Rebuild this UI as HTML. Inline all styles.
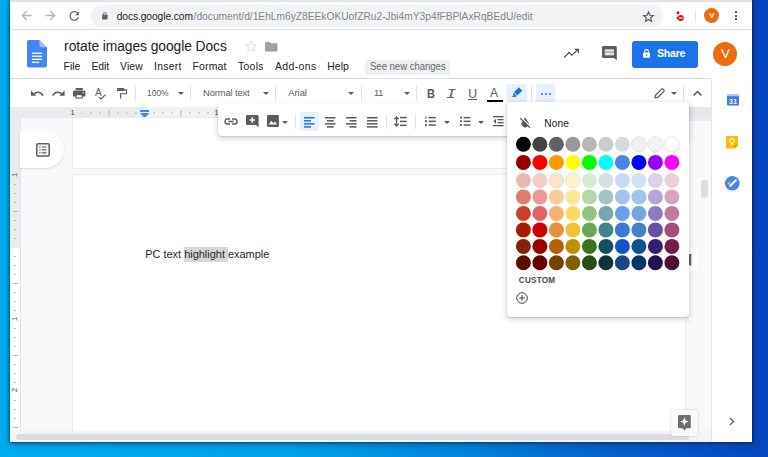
<!DOCTYPE html><html><head><meta charset="utf-8"><title>rotate images google Docs</title><style>
html,body{margin:0;padding:0;}
body{width:768px;height:457px;overflow:hidden;position:relative;font-family:"Liberation Sans", sans-serif;
 background:linear-gradient(90deg,#00adef 0%,#00a2ea 38%,#0385dc 60%,#0560cc 80%,#0645c0 100%);}
#lstrip{position:absolute;left:0;top:0;width:10px;height:442px;background:linear-gradient(90deg,#00adef 0,#00adef 60%,#009fe6 82%,#0083c4 95%,#00699f 100%);}
#rstrip{position:absolute;left:752px;top:0;width:16px;height:443px;background:linear-gradient(90deg,#03338f 0,#0540b4 12%,#0544bd 30%,#0645c0 36%);}
#win{position:absolute;left:10px;top:0;width:742px;height:441.6px;background:#fff;overflow:hidden;box-shadow:0 1px 2px rgba(0,30,80,.5),0 3px 7px rgba(0,40,90,.38);}
svg{overflow:visible;}
.t{position:absolute;white-space:nowrap;line-height:1;font-family:"Liberation Sans", sans-serif;}
.vr{transform:rotate(-90deg);transform-origin:center;line-height:8px;width:6px;height:8px;text-align:center;}
</style></head><body><div id="lstrip"></div><div id="rstrip"></div><div id="win">
<div style="position:absolute;left:0px;top:0px;width:742px;height:2.1px;background:#dfe2e7;"></div>
<div style="position:absolute;left:0px;top:29px;width:742px;height:1px;background:#dcdee1;"></div>
<svg style="position:absolute;left:11px;top:10px;" width="11" height="11" viewBox="0 0 11 11" preserveAspectRatio="none"><path d="M10.5 5.5H1.5M5.8 1L1.3 5.5L5.8 10" fill="none" stroke="#b5b8bc" stroke-width="1.3"/></svg>
<svg style="position:absolute;left:35px;top:10px;" width="11" height="11" viewBox="0 0 11 11" preserveAspectRatio="none"><path d="M0.5 5.5H9.5M5.2 1L9.7 5.5L5.2 10" fill="none" stroke="#b5b8bc" stroke-width="1.3"/></svg>
<svg style="position:absolute;left:58.4px;top:10px;" width="12" height="12" viewBox="0 0 12 12" preserveAspectRatio="none"><path d="M9.6 3.2A4.3 4.3 0 1 0 10.4 7.2" fill="none" stroke="#5f6368" stroke-width="1.2"/><path d="M10.9 1.4V5.2H7.1Z" fill="#5f6368"/></svg>
<div style="position:absolute;left:81px;top:5px;width:572px;height:22px;background:#f1f3f4;border-radius:11px;"></div>
<svg style="position:absolute;left:91.6px;top:12.2px;" width="6" height="8" viewBox="0 0 6 8" preserveAspectRatio="none"><rect x="0.1" y="2.7" width="5.4" height="4.7" rx="0.6" fill="#5f6368"/><path d="M1.4 3V2.1a1.4 1.4 0 0 1 2.8 0V3" fill="none" stroke="#5f6368" stroke-width="0.95"/></svg>
<span class="t url" style="left:106.7px;top:11.97px;font-size:10.2px;color:#202124;letter-spacing:-0.058px;">docs.google.com</span>
<span class="t url2" style="left:183.6px;top:11.97px;font-size:10.2px;color:#80868b;letter-spacing:0.016px;">/document/d/1EhLm6yZ8EEkOKUofZRu2-Jbi4mY3p4fFBPlAxRqBEdU/edit</span>
<svg style="position:absolute;left:633px;top:11px;" width="11" height="11" viewBox="0 0 11 11" preserveAspectRatio="none"><path d="M5.5 0.9L6.9 4.2L10.4 4.5L7.7 6.8L8.5 10.2L5.5 8.4L2.5 10.2L3.3 6.8L0.6 4.5L4.1 4.2Z" fill="none" stroke="#4f5256" stroke-width="1.15"/></svg>
<svg style="position:absolute;left:666.2px;top:11.2px;" width="8" height="10.4" viewBox="0 0 8 10.4" preserveAspectRatio="none"><circle cx="1.95" cy="1.8" r="1.5" fill="#d4161c"/><rect x="0.7" y="3.8" width="1.6" height="2.4" fill="#c9d3e6"/><rect x="0.6" y="6" width="1.6" height="2.3" fill="#2c4f96"/><circle cx="4.75" cy="7.05" r="3.05" fill="#e01218"/><rect x="2.8" y="6.4" width="3.9" height="1.2" fill="#fff"/></svg>
<div style="position:absolute;left:685px;top:10px;width:1px;height:11.8px;background:#e1e3ea;"></div>
<div style="position:absolute;left:694.3px;top:8.3px;width:15.2px;height:15.2px;background:#ee6c0b;border-radius:50%;"></div>
<span class="t cav" style="left:699.3px;top:12.20px;font-size:7.8px;color:#fff;font-weight:700;">V</span>
<div style="position:absolute;left:725px;top:10.9px;width:2px;height:2px;background:#4a4d51;border-radius:30%;"></div>
<div style="position:absolute;left:725px;top:14.65px;width:2px;height:2px;background:#4a4d51;border-radius:30%;"></div>
<div style="position:absolute;left:725px;top:18.4px;width:2px;height:2px;background:#4a4d51;border-radius:30%;"></div>
<div style="position:absolute;left:0px;top:78.3px;width:701px;height:1px;background:#dadce0;"></div>
<svg style="position:absolute;left:17px;top:40px;" width="20" height="27.5" viewBox="0 0 20 27.5" preserveAspectRatio="none"><path d="M2 0H12.5L20 7.5V25.5a2 2 0 0 1-2 2H2a2 2 0 0 1-2-2V2a2 2 0 0 1 2-2Z" fill="#4285f4"/><path d="M12.5 0L20 7.5H14.5a2 2 0 0 1-2-2Z" fill="#a1c2fa"/><path d="M12.6 7.4H20V13Z" fill="#3a76dd" opacity="0.5"/><g fill="#f1f6fe"><rect x="5" y="12.5" width="10" height="1.4"/><rect x="5" y="15.55" width="10" height="1.4"/><rect x="5" y="18.6" width="10" height="1.4"/><rect x="5" y="21.65" width="7.3" height="1.4"/></g></svg>
<span class="t title" style="left:54.1px;top:40.02px;font-size:13.8px;color:#202124;letter-spacing:-0.057px;">rotate images google Docs</span>
<svg style="position:absolute;left:235px;top:39.6px;" width="12" height="12" viewBox="0 0 12 12" preserveAspectRatio="none"><path d="M6 1L7.5 4.6L11.4 4.9L8.4 7.4L9.3 11.2L6 9.2L2.7 11.2L3.6 7.4L0.6 4.9L4.5 4.6Z" fill="none" stroke="#dcdee1" stroke-width="1"/></svg>
<svg style="position:absolute;left:255px;top:42px;" width="12.5" height="9.6" viewBox="0 0 12.5 9.6" preserveAspectRatio="none"><path d="M1 0H4.6L5.9 1.3H11.5a1 1 0 0 1 1 1V8.6a1 1 0 0 1-1 1H1a1 1 0 0 1-1-1V1a1 1 0 0 1 1-1Z" fill="#9aa0a6"/></svg>
<span class="t menu" style="left:53.6px;top:61.70px;font-size:10.4px;color:#202124;letter-spacing:-0.019px;">File</span>
<span class="t menu" style="left:81.5px;top:61.70px;font-size:10.4px;color:#202124;letter-spacing:-0.074px;">Edit</span>
<span class="t menu" style="left:110.1px;top:61.70px;font-size:10.4px;color:#202124;letter-spacing:0.115px;">View</span>
<span class="t menu" style="left:144px;top:61.70px;font-size:10.4px;color:#202124;letter-spacing:0.258px;">Insert</span>
<span class="t menu" style="left:182.5px;top:61.70px;font-size:10.4px;color:#202124;letter-spacing:0.193px;">Format</span>
<span class="t menu" style="left:228px;top:61.70px;font-size:10.4px;color:#202124;letter-spacing:0.305px;">Tools</span>
<span class="t menu" style="left:265px;top:61.70px;font-size:10.4px;color:#202124;letter-spacing:0.411px;">Add-ons</span>
<span class="t menu" style="left:317.3px;top:61.70px;font-size:10.4px;color:#202124;letter-spacing:0.07px;">Help</span>
<div style="position:absolute;left:355.3px;top:60.3px;width:84.7px;height:14.3px;background:#eff0f2;border-radius:2px;"></div>
<span class="t snc" style="left:359.8px;top:62.17px;font-size:10.2px;color:#5f6368;transform:scaleX(.934);transform-origin:left;">See new changes</span>
<svg style="position:absolute;left:553px;top:48px;" width="17" height="11" viewBox="0 0 17 11" preserveAspectRatio="none"><path d="M1.1 9.6L6 4.4L8.8 7.2L15.2 1.4" fill="none" stroke="#444746" stroke-width="1.25"/><path d="M11.6 1.25H15.4V4.9" fill="none" stroke="#444746" stroke-width="1.25"/></svg>
<svg style="position:absolute;left:592.1px;top:45.8px;" width="14.8" height="14.8" viewBox="0 0 14.8 14.8" preserveAspectRatio="none"><path d="M1.5 0H13.3a1.5 1.5 0 0 1 1.5 1.5V14.6L12.2 12H1.5A1.5 1.5 0 0 1 0 10.5V1.5A1.5 1.5 0 0 1 1.5 0Z" fill="#5a5d62"/><rect x="2.8" y="3.3" width="9.2" height="6" fill="#e3e4e6"/><rect x="2.8" y="5.5" width="9.2" height="1.3" fill="#9b9ea2"/></svg>
<div style="position:absolute;left:622.3px;top:40.5px;width:65.9px;height:27.0px;background:#1a73e8;border-radius:3px;"></div>
<svg style="position:absolute;left:633.2px;top:48.8px;" width="7" height="9" viewBox="0 0 7 9" preserveAspectRatio="none"><rect x="0" y="3.4" width="7" height="5.4" rx="0.8" fill="#fff"/><path d="M1.6 3.6V2.5a1.9 1.9 0 0 1 3.8 0V3.6" fill="none" stroke="#fff" stroke-width="1.1"/><circle cx="3.5" cy="6.1" r="0.8" fill="#1a73e8"/></svg>
<span class="t share" style="left:647px;top:47.93px;font-size:10.6px;color:#fff;font-weight:700;letter-spacing:-0.265px;">Share</span>
<div style="position:absolute;left:703.3px;top:42.0px;width:24.2px;height:24.2px;background:#ee6c0b;border-radius:50%;"></div>
<span class="t av" style="left:711.1px;top:47.46px;font-size:13.4px;color:#fff;">V</span>
<svg style="position:absolute;left:20.8px;top:89.8px;" width="12.6" height="7" viewBox="0 0 12.6 7" preserveAspectRatio="none"><path d="M0 0.6V5.8H5.3Z" fill="#585b60"/><path d="M2.6 4.4C5 1.6 9.6 1.2 11.9 5.6" fill="none" stroke="#585b60" stroke-width="1.5"/></svg>
<svg style="position:absolute;left:42.3px;top:89.8px;" width="12.6" height="7" viewBox="0 0 12.6 7" preserveAspectRatio="none"><path d="M12.6 0.6V5.8H7.3Z" fill="#585b60"/><path d="M10 4.4C7.6 1.6 3 1.2 0.7 5.6" fill="none" stroke="#585b60" stroke-width="1.5"/></svg>
<svg style="position:absolute;left:63.2px;top:88.2px;" width="12.4" height="10.6" viewBox="0 0 12.4 10.6" preserveAspectRatio="none"><rect x="2.6" y="0" width="7.2" height="2" fill="#585b60"/><path d="M1.4 2.6H11a1.4 1.4 0 0 1 1.4 1.4V8.6H0V4A1.4 1.4 0 0 1 1.4 2.6Z" fill="#585b60"/><rect x="2.6" y="6.2" width="7.2" height="4.4" fill="#585b60"/><rect x="3.7" y="7.2" width="5" height="2.3" fill="#fff"/><rect x="9.8" y="4.3" width="1.2" height="1.1" fill="#fff"/></svg>
<span class="t spA" style="left:85.0px;top:87.97px;font-size:10.2px;color:#585b60;">A</span>
<svg style="position:absolute;left:88.2px;top:93.6px;" width="8" height="6" viewBox="0 0 8 6" preserveAspectRatio="none"><path d="M0.7 3L3 5L7.6 0.7" fill="none" stroke="#585b60" stroke-width="1.1"/></svg>
<svg style="position:absolute;left:107px;top:88.2px;" width="10.5" height="11" viewBox="0 0 10.5 11" preserveAspectRatio="none"><rect x="0" y="0" width="7.1" height="3.1" rx="0.4" fill="#585b60"/><rect x="0.6" y="1.1" width="5.9" height="0.9" fill="#686b70"/><path d="M7 1.9H9.5V5.7H3.6V10.6" fill="none" stroke="#585b60" stroke-width="1.15"/></svg>
<div style="position:absolute;left:124.7px;top:85.4px;width:1px;height:15.199999999999989px;background:#e2e4e7;"></div>
<span class="t tb" style="left:137px;top:88.06px;font-size:9.5px;color:#585b60;transform:scaleX(.89);transform-origin:left;">100%</span>
<svg style="position:absolute;left:168.3px;top:92.4px;" width="6" height="3.0" viewBox="0 0 6 3.0" preserveAspectRatio="none"><path d="M0 0H6L3.0 3.0Z" fill="#585b60"/></svg>
<div style="position:absolute;left:179.9px;top:85.4px;width:1px;height:15.199999999999989px;background:#e2e4e7;"></div>
<span class="t tb" style="left:193px;top:88.14px;font-size:9.4px;color:#585b60;letter-spacing:-0.126px;">Normal text</span>
<svg style="position:absolute;left:252.7px;top:92.4px;" width="6" height="3.0" viewBox="0 0 6 3.0" preserveAspectRatio="none"><path d="M0 0H6L3.0 3.0Z" fill="#585b60"/></svg>
<div style="position:absolute;left:265.3px;top:85.4px;width:1px;height:15.199999999999989px;background:#e2e4e7;"></div>
<span class="t tb" style="left:278.3px;top:88.14px;font-size:9.4px;color:#585b60;letter-spacing:-0.026px;">Arial</span>
<svg style="position:absolute;left:338px;top:92.4px;" width="6" height="3.0" viewBox="0 0 6 3.0" preserveAspectRatio="none"><path d="M0 0H6L3.0 3.0Z" fill="#585b60"/></svg>
<div style="position:absolute;left:350.8px;top:85.4px;width:1px;height:15.199999999999989px;background:#e2e4e7;"></div>
<span class="t tb" style="left:364.0px;top:88.14px;font-size:9.4px;color:#585b60;letter-spacing:-0.6px;">11</span>
<svg style="position:absolute;left:394.4px;top:92.4px;" width="6" height="3.0" viewBox="0 0 6 3.0" preserveAspectRatio="none"><path d="M0 0H6L3.0 3.0Z" fill="#585b60"/></svg>
<div style="position:absolute;left:406.4px;top:85.4px;width:1px;height:15.199999999999989px;background:#e2e4e7;"></div>
<span class="t bB" style="left:416.6px;top:87.57px;font-size:12.2px;color:#585b60;font-weight:700;transform:scaleX(.9);transform-origin:left;">B</span>
<span class="t bI" style="left:435.8px;top:88.49px;font-size:13.6px;color:#585b60;font-style:italic;font-family:&quot;Liberation Mono&quot;,monospace;transform:scaleX(1.25);transform-origin:left;">I</span>
<span class="t bU" style="left:458.3px;top:87.57px;font-size:12.2px;color:#585b60;">U</span>
<div style="position:absolute;left:457.9px;top:99.2px;width:9.6px;height:1.2px;background:#585b60;"></div>
<span class="t bA" style="left:480.0px;top:86.64px;font-size:12px;color:#585b60;">A</span>
<div style="position:absolute;left:476.5px;top:99.7px;width:16.6px;height:2.6px;background:#000;"></div>
<div style="position:absolute;left:496.9px;top:83.5px;width:20.6px;height:18.7px;background:#e8f0fe;border-radius:2px;"></div>
<svg style="position:absolute;left:502px;top:87.3px;" width="10.6" height="10.4" viewBox="0 0 10.6 10.4" preserveAspectRatio="none"><path d="M6.9 0.3L10.3 3.7L5.4 8.6L2 5.2Z" fill="#1a73e8"/><path d="M1.7 5.9L4.7 8.9L3.6 10H0.3V9.5L1.6 8.2L0.9 7.5Z" fill="#1a73e8"/></svg>
<div style="position:absolute;left:521.0px;top:85.4px;width:1px;height:15.199999999999989px;background:#e2e4e7;"></div>
<div style="position:absolute;left:526px;top:83.5px;width:19.4px;height:18.7px;background:#e8f0fe;border-radius:2px;"></div>
<div style="position:absolute;left:530.8px;top:92.8px;width:2.1px;height:2.1px;background:#1a73e8;border-radius:50%;"></div>
<div style="position:absolute;left:534.9px;top:92.8px;width:2.1px;height:2.1px;background:#1a73e8;border-radius:50%;"></div>
<div style="position:absolute;left:539px;top:92.8px;width:2.1px;height:2.1px;background:#1a73e8;border-radius:50%;"></div>
<svg style="position:absolute;left:644px;top:87.8px;" width="11" height="10.4" viewBox="0 0 11 10.4" preserveAspectRatio="none"><path d="M1.1 9.4L1.5 7.2L7.6 1.1a1 1 0 0 1 1.4 0L9.9 2a1 1 0 0 1 0 1.4L3.8 9.5L1.6 9.9Z" fill="none" stroke="#585b60" stroke-width="1.3"/></svg>
<svg style="position:absolute;left:660.5px;top:92.4px;" width="6" height="3.0" viewBox="0 0 6 3.0" preserveAspectRatio="none"><path d="M0 0H6L3.0 3.0Z" fill="#585b60"/></svg>
<div style="position:absolute;left:672.5px;top:85.4px;width:1px;height:15.199999999999989px;background:#e2e4e7;"></div>
<svg style="position:absolute;left:683px;top:90px;" width="9" height="6" viewBox="0 0 9 6" preserveAspectRatio="none"><path d="M0.6 5.4L4.5 1.5L8.4 5.4" fill="none" stroke="#585b60" stroke-width="1.5"/></svg>
<div style="position:absolute;left:701px;top:79px;width:1px;height:363px;background:#e3e5e8;"></div>
<svg style="position:absolute;left:716.5px;top:94px;" width="12" height="11.4" viewBox="0 0 12 11.4" preserveAspectRatio="none"><rect x="0" y="0" width="12" height="11.4" rx="1" fill="#3f7be8"/><rect x="0" y="0" width="12" height="2.2" fill="#b4c8ee"/><text x="6" y="9.6" font-size="7.6" font-family="Liberation Sans, sans-serif" font-weight="700" fill="#e4eefd" text-anchor="middle">31</text></svg>
<svg style="position:absolute;left:716.4px;top:136.0px;" width="12" height="12.6" viewBox="0 0 12 12.6" preserveAspectRatio="none"><path d="M0 1.2A1.2 1.2 0 0 1 1.2 0H10.8A1.2 1.2 0 0 1 12 1.2V9.2L8.6 12.6H1.2A1.2 1.2 0 0 1 0 11.4Z" fill="#fbbc04"/><path d="M8.6 12.6V9.2H12Z" fill="#e09b00"/><circle cx="6" cy="5" r="2.3" fill="none" stroke="#fff" stroke-width="1"/><rect x="5" y="7.4" width="2" height="1.6" fill="#fff"/></svg>
<svg style="position:absolute;left:715.4px;top:176.4px;" width="14.6" height="14.6" viewBox="0 0 14.6 14.6" preserveAspectRatio="none"><circle cx="7.3" cy="7.3" r="7.3" fill="#4285f4"/><path d="M5.4 9.8L10.6 4.4" fill="none" stroke="#fff" stroke-width="2.2" stroke-linecap="round"/><circle cx="3.9" cy="7.4" r="1.3" fill="#fbbc04"/></svg>
<svg style="position:absolute;left:719px;top:417.0px;" width="6" height="9" viewBox="0 0 6 9" preserveAspectRatio="none"><path d="M1 1L4.6 4.5L1 8" fill="none" stroke="#5f6368" stroke-width="1.3"/></svg>
<div style="position:absolute;left:0px;top:107.3px;width:701px;height:11px;background:#f1f2f4;"></div>
<div style="position:absolute;left:0px;top:107.3px;width:134px;height:11px;background:#e9ebee;"></div>
<div style="position:absolute;left:603px;top:107.3px;width:98px;height:11.2px;background:#e6e8eb;"></div>
<div style="position:absolute;left:0px;top:118.3px;width:701px;height:312.7px;background:#f8f9fa;"></div>
<div style="position:absolute;left:70.89000000000001px;top:112px;width:1.6px;height:2px;background:#cfd2d6;"></div>
<div style="position:absolute;left:79.92000000000002px;top:112px;width:1.6px;height:2px;background:#cfd2d6;"></div>
<div style="position:absolute;left:88.95px;top:112px;width:1.6px;height:2px;background:#cfd2d6;"></div>
<div style="position:absolute;left:97.98px;top:110.3px;width:1.6px;height:5.4px;background:#cdd0d3;"></div>
<div style="position:absolute;left:107.01px;top:112px;width:1.6px;height:2px;background:#cfd2d6;"></div>
<div style="position:absolute;left:116.04px;top:112px;width:1.6px;height:2px;background:#cfd2d6;"></div>
<div style="position:absolute;left:125.07000000000001px;top:112px;width:1.6px;height:2px;background:#cfd2d6;"></div>
<div style="position:absolute;left:143.13px;top:112px;width:1.6px;height:2px;background:#cfd2d6;"></div>
<div style="position:absolute;left:152.16px;top:112px;width:1.6px;height:2px;background:#cfd2d6;"></div>
<div style="position:absolute;left:161.19px;top:112px;width:1.6px;height:2px;background:#cfd2d6;"></div>
<div style="position:absolute;left:170.22px;top:110.3px;width:1.6px;height:5.4px;background:#cdd0d3;"></div>
<div style="position:absolute;left:179.25px;top:112px;width:1.6px;height:2px;background:#cfd2d6;"></div>
<div style="position:absolute;left:188.27999999999997px;top:112px;width:1.6px;height:2px;background:#cfd2d6;"></div>
<div style="position:absolute;left:197.31px;top:112px;width:1.6px;height:2px;background:#cfd2d6;"></div>
<span class="t rl" style="left:60.6px;top:109.45px;font-size:7.5px;color:#444746;">1</span>
<span class="t rl" style="left:204.4px;top:109.45px;font-size:7.5px;color:#444746;">1</span>
<div style="position:absolute;left:129.8px;top:109.7px;width:9.4px;height:2.3px;background:#4285f4;"></div>
<svg style="position:absolute;left:129.8px;top:112.6px;" width="9.4" height="5.2" viewBox="0 0 9.4 5.2" preserveAspectRatio="none"><path d="M0 0H9.4L4.7 5.2Z" fill="#4285f4"/></svg>
<div style="position:absolute;left:0px;top:118.3px;width:10.4px;height:129.7px;background:#e9ebee;"></div>
<div style="position:absolute;left:0px;top:248px;width:10.4px;height:184px;background:#ffffff;"></div>
<div style="position:absolute;left:10.4px;top:118.3px;width:0.6px;height:312.7px;background:#e3e5e8;"></div>
<div style="position:absolute;left:4.2px;top:183.53px;width:2.2px;height:1.2px;background:#b5b8bc;"></div>
<div style="position:absolute;left:4.2px;top:192.56px;width:2.2px;height:1.2px;background:#b5b8bc;"></div>
<div style="position:absolute;left:4.2px;top:201.59px;width:2.2px;height:1.2px;background:#b5b8bc;"></div>
<div style="position:absolute;left:3px;top:210.72px;width:5px;height:1px;background:#b5b8bc;"></div>
<div style="position:absolute;left:4.2px;top:219.65px;width:2.2px;height:1.2px;background:#b5b8bc;"></div>
<div style="position:absolute;left:4.2px;top:228.67999999999998px;width:2.2px;height:1.2px;background:#b5b8bc;"></div>
<div style="position:absolute;left:4.2px;top:237.71px;width:2.2px;height:1.2px;background:#b5b8bc;"></div>
<div style="position:absolute;left:4.2px;top:255.77px;width:2.2px;height:1.2px;background:#b5b8bc;"></div>
<div style="position:absolute;left:4.2px;top:264.79999999999995px;width:2.2px;height:1.2px;background:#b5b8bc;"></div>
<div style="position:absolute;left:4.2px;top:273.83px;width:2.2px;height:1.2px;background:#b5b8bc;"></div>
<div style="position:absolute;left:3px;top:282.96px;width:5px;height:1px;background:#b5b8bc;"></div>
<div style="position:absolute;left:4.2px;top:291.89px;width:2.2px;height:1.2px;background:#b5b8bc;"></div>
<div style="position:absolute;left:4.2px;top:300.91999999999996px;width:2.2px;height:1.2px;background:#b5b8bc;"></div>
<div style="position:absolute;left:4.2px;top:309.94999999999993px;width:2.2px;height:1.2px;background:#b5b8bc;"></div>
<div style="position:absolute;left:4.2px;top:328.01px;width:2.2px;height:1.2px;background:#b5b8bc;"></div>
<div style="position:absolute;left:4.2px;top:337.03999999999996px;width:2.2px;height:1.2px;background:#b5b8bc;"></div>
<div style="position:absolute;left:4.2px;top:346.06999999999994px;width:2.2px;height:1.2px;background:#b5b8bc;"></div>
<div style="position:absolute;left:3px;top:355.2px;width:5px;height:1px;background:#b5b8bc;"></div>
<div style="position:absolute;left:4.2px;top:364.13px;width:2.2px;height:1.2px;background:#b5b8bc;"></div>
<div style="position:absolute;left:4.2px;top:373.15999999999997px;width:2.2px;height:1.2px;background:#b5b8bc;"></div>
<div style="position:absolute;left:4.2px;top:382.18999999999994px;width:2.2px;height:1.2px;background:#b5b8bc;"></div>
<div style="position:absolute;left:4.2px;top:400.24999999999994px;width:2.2px;height:1.2px;background:#b5b8bc;"></div>
<div style="position:absolute;left:4.2px;top:409.28px;width:2.2px;height:1.2px;background:#b5b8bc;"></div>
<div style="position:absolute;left:4.2px;top:418.30999999999995px;width:2.2px;height:1.2px;background:#b5b8bc;"></div>
<div style="position:absolute;left:3px;top:427.43999999999994px;width:5px;height:1px;background:#b5b8bc;"></div>
<span class="t vr" style="left:2px;top:171.0px;font-size:7.5px;color:#444746;">1</span>
<span class="t vr" style="left:2px;top:315.3px;font-size:7.5px;color:#444746;">1</span>
<span class="t vr" style="left:2px;top:386.4px;font-size:7.5px;color:#444746;">2</span>
<div style="position:absolute;left:62.5px;top:118.3px;width:612.3px;height:49.7px;background:#fff;box-shadow:0 0 0 1px #e9ebed;"></div>
<div style="position:absolute;left:62.5px;top:175.3px;width:612.3px;height:257px;background:#fff;box-shadow:0 0 0 1px #e9ebed;"></div>
<div style="position:absolute;left:10.4px;top:131px;width:43.2px;height:36.8px;background:#fff;border-radius:0 18.4px 18.4px 0;box-shadow:0 1px 2px rgba(60,64,67,.18);"></div>
<svg style="position:absolute;left:25.6px;top:142.5px;" width="14" height="13.8" viewBox="0 0 14 13.8" preserveAspectRatio="none"><rect x="0.8" y="0.8" width="12.4" height="12.2" rx="1.2" fill="none" stroke="#5a5d62" stroke-width="1.5"/><g fill="#5a5d62"><circle cx="3.9" cy="4" r="0.75"/><rect x="5.6" y="3.4" width="5" height="1.2" rx="0.4"/><circle cx="3.9" cy="6.9" r="0.75"/><rect x="5.6" y="6.3" width="5" height="1.2" rx="0.4"/><circle cx="3.9" cy="9.8" r="0.75"/><rect x="5.6" y="9.2" width="5" height="1.2" rx="0.4"/></g></svg>
<div style="position:absolute;left:173.8px;top:247.1px;width:44.2px;height:14.7px;background:#d7d7d7;"></div>
<span class="t doc" style="left:135.2px;top:248.59px;font-size:11px;color:#1f1f1f;letter-spacing:-0.022px;">PC text highlight example</span>
<div style="position:absolute;left:676px;top:118.3px;width:25px;height:2.8px;background:#e9ebee;"></div>
<div style="position:absolute;left:691.3px;top:180px;width:6.3px;height:18px;background:#dadce0;border-radius:3.2px;"></div>
<svg style="position:absolute;left:678px;top:246px;" width="12" height="28" viewBox="0 0 12 28" preserveAspectRatio="none"><path d="M0.6 0.4H5L10.9 6V22L5 27.7H0.6Z" fill="#fff" stroke="#eceef0" stroke-width="0.6"/><rect x="0.3" y="8" width="3" height="11.5" fill="#63666b"/></svg>
<div style="position:absolute;left:0px;top:430.5px;width:701px;height:11.5px;background:#f3f4f6;"></div>
<div style="position:absolute;left:6px;top:433.5px;width:673px;height:6px;background:#dadce0;border-radius:3px;"></div>
<div style="position:absolute;left:660.6px;top:409.5px;width:27.8px;height:26px;background:#f8f9fa;border-radius:2px;box-shadow:0 0 2px rgba(60,64,67,.35);"></div>
<svg style="position:absolute;left:668px;top:415.1px;" width="12.8" height="15.8" viewBox="0 0 12.6 15.4" preserveAspectRatio="none"><path d="M1.2 0H11.4a1.2 1.2 0 0 1 1.2 1.2V11.6a1.2 1.2 0 0 1-1.2 1.2H8.2L6.3 15L4.4 12.8H1.2A1.2 1.2 0 0 1 0 11.6V1.2A1.2 1.2 0 0 1 1.2 0Z" fill="#6d6e70"/><path d="M6.3 2.3L7.5 5.2L10.4 6.4L7.5 7.6L6.3 10.5L5.1 7.6L2.2 6.4L5.1 5.2Z" fill="#fff"/></svg>
<div style="position:absolute;left:207.5px;top:105px;width:470px;height:30.6px;background:#fff;border-radius:0 0 0 4px;box-shadow:0 1px 2px rgba(60,64,67,.22),0 2px 5px 2px rgba(60,64,67,.12);"></div>
<div style="position:absolute;left:208px;top:103px;width:470px;height:5px;background:#fff;"></div>
<svg style="position:absolute;left:214.2px;top:118.2px;" width="14" height="7" viewBox="0 0 14 7" preserveAspectRatio="none"><path d="M6 1H3.5a2.5 2.5 0 0 0 0 5H6M8 1H10.5a2.5 2.5 0 0 1 0 5H8M4.3 3.5H9.7" fill="none" stroke="#585b60" stroke-width="1.4"/></svg>
<svg style="position:absolute;left:235.8px;top:115.4px;" width="12.6" height="12.5" viewBox="0 0 12.6 12.2" preserveAspectRatio="none"><path d="M1.2 0H11.4a1.2 1.2 0 0 1 1.2 1.2V12.2L10 9.8H1.2A1.2 1.2 0 0 1 0 8.6V1.2A1.2 1.2 0 0 1 1.2 0Z" fill="#585b60"/><path d="M6.3 2.2V7.6M3.6 4.9H9" stroke="#fff" stroke-width="1.5"/></svg>
<svg style="position:absolute;left:257px;top:115.2px;" width="11.9" height="11.9" viewBox="0 0 11.6 11" preserveAspectRatio="none"><rect x="0" y="0" width="11.6" height="11" rx="1.2" fill="#585b60"/><path d="M1.6 8.8L4.3 5.4L6.2 7.7L7.6 6L10 8.8Z" fill="#fff"/></svg>
<svg style="position:absolute;left:272.3px;top:120.9px;" width="6" height="3.0" viewBox="0 0 6 3.0" preserveAspectRatio="none"><path d="M0 0H6L3.0 3.0Z" fill="#585b60"/></svg>
<div style="position:absolute;left:284.9px;top:114.2px;width:1px;height:14.499999999999986px;background:#e2e4e7;"></div>
<div style="position:absolute;left:289.6px;top:112px;width:19.1px;height:18.8px;background:#e8f0fe;border-radius:2px;"></div>
<svg style="position:absolute;left:294.2px;top:116.5px;" width="10.6" height="11" viewBox="0 0 10.6 11" preserveAspectRatio="none"><rect x="0" y="0.00" width="10.5" height="1.5" fill="#1a73e8"/><rect x="0" y="3.05" width="7" height="1.5" fill="#1a73e8"/><rect x="0" y="6.10" width="10.5" height="1.5" fill="#1a73e8"/><rect x="0" y="9.15" width="7" height="1.5" fill="#1a73e8"/></svg>
<svg style="position:absolute;left:315px;top:116.5px;" width="10.6" height="11" viewBox="0 0 10.6 11" preserveAspectRatio="none"><rect x="0" y="0.00" width="10.5" height="1.5" fill="#585b60"/><rect x="1.8" y="3.05" width="7" height="1.5" fill="#585b60"/><rect x="0" y="6.10" width="10.5" height="1.5" fill="#585b60"/><rect x="1.8" y="9.15" width="7" height="1.5" fill="#585b60"/></svg>
<svg style="position:absolute;left:335.5px;top:116.5px;" width="10.6" height="11" viewBox="0 0 10.6 11" preserveAspectRatio="none"><rect x="0" y="0.00" width="10.5" height="1.5" fill="#585b60"/><rect x="3.5" y="3.05" width="7" height="1.5" fill="#585b60"/><rect x="0" y="6.10" width="10.5" height="1.5" fill="#585b60"/><rect x="3.5" y="9.15" width="7" height="1.5" fill="#585b60"/></svg>
<svg style="position:absolute;left:357px;top:116.5px;" width="10.6" height="11" viewBox="0 0 10.6 11" preserveAspectRatio="none"><rect x="0" y="0.00" width="10.5" height="1.5" fill="#585b60"/><rect x="0" y="3.05" width="10.5" height="1.5" fill="#585b60"/><rect x="0" y="6.10" width="10.5" height="1.5" fill="#585b60"/><rect x="0" y="9.15" width="10.5" height="1.5" fill="#585b60"/></svg>
<div style="position:absolute;left:376.0px;top:114.2px;width:1px;height:14.499999999999986px;background:#e2e4e7;"></div>
<svg style="position:absolute;left:384.2px;top:116.2px;" width="12.8" height="11" viewBox="0 0 12.8 11" preserveAspectRatio="none"><path d="M2.5 1.8V9.2M0.4 3.2L2.5 0.9L4.6 3.2M0.4 7.8L2.5 10.1L4.6 7.8" fill="none" stroke="#585b60" stroke-width="1.35"/><g fill="#585b60"><rect x="6" y="0.8" width="6.6" height="1.5"/><rect x="6" y="4.7" width="6.6" height="1.5"/><rect x="6" y="8.6" width="6.6" height="1.5"/></g></svg>
<div style="position:absolute;left:405.1px;top:114.2px;width:1px;height:14.499999999999986px;background:#e2e4e7;"></div>
<svg style="position:absolute;left:414.6px;top:116.2px;" width="11" height="10.6" viewBox="0 0 11 10.6" preserveAspectRatio="none"><g fill="#585b60"><rect x="0.4" y="0.4" width="1" height="2.4"/><rect x="0" y="4.2" width="1.8" height="2.2"/><rect x="0" y="8" width="1.8" height="2.2"/><rect x="3.6" y="0.9" width="7.2" height="1.5"/><rect x="3.6" y="4.6" width="7.2" height="1.5"/><rect x="3.6" y="8.3" width="7.2" height="1.5"/></g></svg>
<svg style="position:absolute;left:433.7px;top:120.9px;" width="6" height="3.0" viewBox="0 0 6 3.0" preserveAspectRatio="none"><path d="M0 0H6L3.0 3.0Z" fill="#585b60"/></svg>
<svg style="position:absolute;left:449.8px;top:116.2px;" width="10.6" height="10.6" viewBox="0 0 10.6 10.6" preserveAspectRatio="none"><g fill="#585b60"><rect x="0" y="0.6" width="1.9" height="1.9"/><rect x="0" y="4.3" width="1.9" height="1.9"/><rect x="0" y="8" width="1.9" height="1.9"/><rect x="3.6" y="0.9" width="6.8" height="1.5"/><rect x="3.6" y="4.6" width="6.8" height="1.5"/><rect x="3.6" y="8.3" width="6.8" height="1.5"/></g></svg>
<svg style="position:absolute;left:468.1px;top:120.9px;" width="6" height="3.0" viewBox="0 0 6 3.0" preserveAspectRatio="none"><path d="M0 0H6L3.0 3.0Z" fill="#585b60"/></svg>
<svg style="position:absolute;left:483.3px;top:116.2px;" width="10.6" height="10.6" viewBox="0 0 10.6 10.6" preserveAspectRatio="none"><g fill="#585b60"><rect x="0" y="0" width="10.6" height="1.3"/><rect x="4.4" y="3" width="6.2" height="1.3"/><rect x="4.4" y="6" width="6.2" height="1.3"/><rect x="0" y="9" width="10.6" height="1.3"/><path d="M3 2.7V7.7L0.3 5.2Z"/></g></svg>
<div style="position:absolute;left:496.5px;top:101.5px;width:182px;height:215.0px;background:#fff;border-radius:4px;box-shadow:0 1px 2px rgba(60,64,67,.22),0 2px 5px 2px rgba(60,64,67,.12);"></div>
<svg style="position:absolute;left:510.3px;top:116.6px;" width="11" height="11.4" viewBox="0 0 11 11.4" preserveAspectRatio="none"><path d="M5.1 0.2L7.7 4.4A3.5 3.5 0 1 1 2.5 4.4Z" fill="#585b60"/><path d="M1.1 0.5L10.5 9.7" stroke="#fff" stroke-width="1.3"/><path d="M0.3 1.2L10 10.7" stroke="#585b60" stroke-width="1.25"/></svg>
<span class="t none" style="left:534.3px;top:119.17px;font-size:10.2px;color:#202124;letter-spacing:0.105px;">None</span>
<svg style="position:absolute;left:496.5px;top:102px;" width="182" height="175" viewBox="0 0 182 175" preserveAspectRatio="none"><circle cx="16.40" cy="42.30" r="7.5" fill="#000000"/><circle cx="32.90" cy="42.30" r="7.5" fill="#434343"/><circle cx="49.40" cy="42.30" r="7.5" fill="#5f6368"/><circle cx="65.90" cy="42.30" r="7.5" fill="#999999"/><circle cx="82.40" cy="42.30" r="7.5" fill="#b7b7b7"/><circle cx="98.90" cy="42.30" r="7.5" fill="#cccccc"/><circle cx="115.40" cy="42.30" r="7.5" fill="#d9d9d9"/><circle cx="131.90" cy="42.30" r="7.5" fill="#efefef" stroke="#dadce0" stroke-width="0.8"/><circle cx="148.40" cy="42.30" r="7.5" fill="#f3f3f3" stroke="#dadce0" stroke-width="0.8"/><circle cx="164.90" cy="42.30" r="7.5" fill="#ffffff" stroke="#dadce0" stroke-width="0.8"/><circle cx="16.40" cy="60.40" r="7.5" fill="#980000"/><circle cx="32.90" cy="60.40" r="7.5" fill="#ff0000"/><circle cx="49.40" cy="60.40" r="7.5" fill="#ff9900"/><circle cx="65.90" cy="60.40" r="7.5" fill="#ffff00"/><circle cx="82.40" cy="60.40" r="7.5" fill="#00ff00"/><circle cx="98.90" cy="60.40" r="7.5" fill="#00ffff"/><circle cx="115.40" cy="60.40" r="7.5" fill="#4a86e8"/><circle cx="131.90" cy="60.40" r="7.5" fill="#0000ff"/><circle cx="148.40" cy="60.40" r="7.5" fill="#9900ff"/><circle cx="164.90" cy="60.40" r="7.5" fill="#ff00ff"/><circle cx="16.40" cy="78.50" r="7.5" fill="#e6b8af"/><circle cx="32.90" cy="78.50" r="7.5" fill="#f4cccc"/><circle cx="49.40" cy="78.50" r="7.5" fill="#fce5cd" stroke="#dadce0" stroke-width="0.8"/><circle cx="65.90" cy="78.50" r="7.5" fill="#fff2cc" stroke="#dadce0" stroke-width="0.8"/><circle cx="82.40" cy="78.50" r="7.5" fill="#d9ead3"/><circle cx="98.90" cy="78.50" r="7.5" fill="#d0e0e3"/><circle cx="115.40" cy="78.50" r="7.5" fill="#c9daf8"/><circle cx="131.90" cy="78.50" r="7.5" fill="#cfe2f3"/><circle cx="148.40" cy="78.50" r="7.5" fill="#d9d2e9"/><circle cx="164.90" cy="78.50" r="7.5" fill="#ead1dc"/><circle cx="16.40" cy="94.90" r="7.5" fill="#dd7e6b"/><circle cx="32.90" cy="94.90" r="7.5" fill="#ea9999"/><circle cx="49.40" cy="94.90" r="7.5" fill="#f9cb9c"/><circle cx="65.90" cy="94.90" r="7.5" fill="#ffe599"/><circle cx="82.40" cy="94.90" r="7.5" fill="#b6d7a8"/><circle cx="98.90" cy="94.90" r="7.5" fill="#a2c4c9"/><circle cx="115.40" cy="94.90" r="7.5" fill="#a4c2f4"/><circle cx="131.90" cy="94.90" r="7.5" fill="#9fc5e8"/><circle cx="148.40" cy="94.90" r="7.5" fill="#b4a7d6"/><circle cx="164.90" cy="94.90" r="7.5" fill="#d5a6bd"/><circle cx="16.40" cy="111.40" r="7.5" fill="#cc4125"/><circle cx="32.90" cy="111.40" r="7.5" fill="#e06666"/><circle cx="49.40" cy="111.40" r="7.5" fill="#f6b26b"/><circle cx="65.90" cy="111.40" r="7.5" fill="#ffd966"/><circle cx="82.40" cy="111.40" r="7.5" fill="#93c47d"/><circle cx="98.90" cy="111.40" r="7.5" fill="#76a5af"/><circle cx="115.40" cy="111.40" r="7.5" fill="#6d9eeb"/><circle cx="131.90" cy="111.40" r="7.5" fill="#6fa8dc"/><circle cx="148.40" cy="111.40" r="7.5" fill="#8e7cc3"/><circle cx="164.90" cy="111.40" r="7.5" fill="#c27ba0"/><circle cx="16.40" cy="127.90" r="7.5" fill="#a61c00"/><circle cx="32.90" cy="127.90" r="7.5" fill="#cc0000"/><circle cx="49.40" cy="127.90" r="7.5" fill="#e69138"/><circle cx="65.90" cy="127.90" r="7.5" fill="#f1c232"/><circle cx="82.40" cy="127.90" r="7.5" fill="#6aa84f"/><circle cx="98.90" cy="127.90" r="7.5" fill="#45818e"/><circle cx="115.40" cy="127.90" r="7.5" fill="#3c78d8"/><circle cx="131.90" cy="127.90" r="7.5" fill="#3d85c6"/><circle cx="148.40" cy="127.90" r="7.5" fill="#674ea7"/><circle cx="164.90" cy="127.90" r="7.5" fill="#a64d79"/><circle cx="16.40" cy="144.40" r="7.5" fill="#85200c"/><circle cx="32.90" cy="144.40" r="7.5" fill="#990000"/><circle cx="49.40" cy="144.40" r="7.5" fill="#b45f06"/><circle cx="65.90" cy="144.40" r="7.5" fill="#bf9000"/><circle cx="82.40" cy="144.40" r="7.5" fill="#38761d"/><circle cx="98.90" cy="144.40" r="7.5" fill="#134f5c"/><circle cx="115.40" cy="144.40" r="7.5" fill="#1155cc"/><circle cx="131.90" cy="144.40" r="7.5" fill="#0b5394"/><circle cx="148.40" cy="144.40" r="7.5" fill="#351c75"/><circle cx="164.90" cy="144.40" r="7.5" fill="#741b47"/><circle cx="16.40" cy="160.80" r="7.5" fill="#5b0f00"/><circle cx="32.90" cy="160.80" r="7.5" fill="#660000"/><circle cx="49.40" cy="160.80" r="7.5" fill="#783f04"/><circle cx="65.90" cy="160.80" r="7.5" fill="#7f6000"/><circle cx="82.40" cy="160.80" r="7.5" fill="#274e13"/><circle cx="98.90" cy="160.80" r="7.5" fill="#0c343d"/><circle cx="115.40" cy="160.80" r="7.5" fill="#1c4587"/><circle cx="131.90" cy="160.80" r="7.5" fill="#073763"/><circle cx="148.40" cy="160.80" r="7.5" fill="#20124d"/><circle cx="164.90" cy="160.80" r="7.5" fill="#4c1130"/></svg>
<span class="t custom" style="left:508.8px;top:277.36px;font-size:8.2px;color:#484b4f;font-weight:700;letter-spacing:0.183px;">CUSTOM</span>
<svg style="position:absolute;left:506.4px;top:292.0px;" width="12" height="12" viewBox="0 0 12 12" preserveAspectRatio="none"><circle cx="6" cy="6" r="5.3" fill="none" stroke="#444746" stroke-width="1"/><path d="M6 3.2V8.8M3.2 6H8.8" stroke="#444746" stroke-width="1"/></svg>
</div></body></html>
